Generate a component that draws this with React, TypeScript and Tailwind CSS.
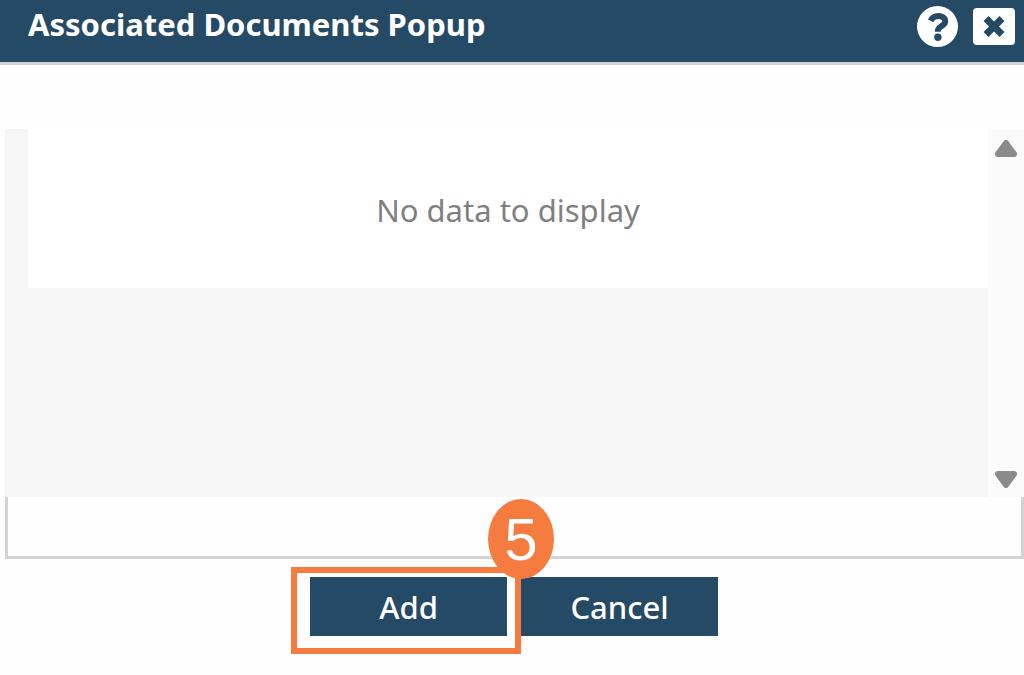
import React from "react";

type ActionButtonProps = {
  label: string;
  className?: string;
};

const ActionButton = ({ label, className = "" }: ActionButtonProps) => (
  <button
    type="button"
    className={`h-[59px] w-[197px] bg-[#254a65] text-[31px] leading-10 font-medium text-white ${className}`}
  >
    {label}
  </button>
);

const PopupHeader = () => (
  <header className="flex h-[65px] items-start justify-between border-b-[3px] border-[#d0d1d5] bg-[#254a65] pr-[9px] pl-7">
    <h1 className="pt-1 text-[31px] leading-10 font-bold text-white">
      Associated Documents Popup
    </h1>
    <div className="flex items-center gap-[15px] pt-[6px]">
      <button type="button" aria-label="Help">
        <svg width="41" height="41" viewBox="0 0 41 41" className="block">
          <circle cx="20.5" cy="20.5" r="20.5" fill="#fff" />
          <path
            d="M13.6 14.8C15.4 11.4 18 10 21.2 10c4 0 7 2.2 7 5.4 0 4.6-7.3 4.6-7.3 9.4v1"
            fill="none"
            stroke="#254a65"
            strokeWidth="6"
          />
          <circle cx="20.9" cy="31.2" r="3.7" fill="#254a65" />
        </svg>
      </button>
      <button type="button" aria-label="Close">
        <svg width="42" height="37" viewBox="0 0 42 37" className="block">
          <rect width="42" height="37" rx="4" fill="#fff" />
          <path
            d="M13 10.5 29 26.5M29 10.5 13 26.5"
            stroke="#254a65"
            strokeWidth="7"
          />
        </svg>
      </button>
    </div>
  </header>
);

const DocumentList = () => (
  <section className="flex h-[368px] bg-[#f6f6f6]">
    <div className="flex-1 pl-[23px]">
      <div className="flex h-[159px] items-center justify-center bg-white pt-[2px]">
        <p className="text-[31px] leading-10 text-[#808080]">
          No data to display
        </p>
      </div>
    </div>
    {/* Scroll arrows */}
    <div className="flex w-9 flex-col items-center justify-between bg-[#fbfbfb] pt-[11px] pb-[9px]">
      <button type="button" aria-label="Scroll up">
        <svg width="22" height="17" viewBox="0 0 22 17" className="block">
          <path
            d="M11 3 19 14H3Z"
            fill="#8b8b8b"
            stroke="#8b8b8b"
            strokeWidth="6"
            strokeLinejoin="round"
          />
        </svg>
      </button>
      <button type="button" aria-label="Scroll down">
        <svg width="22" height="17" viewBox="0 0 22 17" className="block">
          <path
            d="M11 14 19 3H3Z"
            fill="#8b8b8b"
            stroke="#8b8b8b"
            strokeWidth="6"
            strokeLinejoin="round"
          />
        </svg>
      </button>
    </div>
  </section>
);

const App = () => {
  return (
    <main className="min-h-screen bg-[#fefefe] font-['Noto_Sans',sans-serif]">
      <PopupHeader />

      <div className="pt-16 pl-[5px]">
        <DocumentList />
        <div className="h-[62px] border-x-[3px] border-b-[3px] border-[#d4d4d4]" />
      </div>

      <footer className="flex items-start justify-center pt-2 pr-[15px]">
        <div className="relative border-[6px] border-[#f67b3f] pt-1 pr-2 pb-3 pl-[13px]">
          <ActionButton label="Add" className="block" />
          {/* Step marker */}
          <span className="absolute -top-[74px] -right-[39px] flex h-20 w-[66px] items-center justify-center rounded-[50%] bg-[#f67b3f] pt-[2px] font-['Liberation_Sans',sans-serif] text-[60px] leading-none text-white">
            5
          </span>
        </div>
        <ActionButton label="Cancel" className="mt-[10px]" />
      </footer>
    </main>
  );
};

export default App;
